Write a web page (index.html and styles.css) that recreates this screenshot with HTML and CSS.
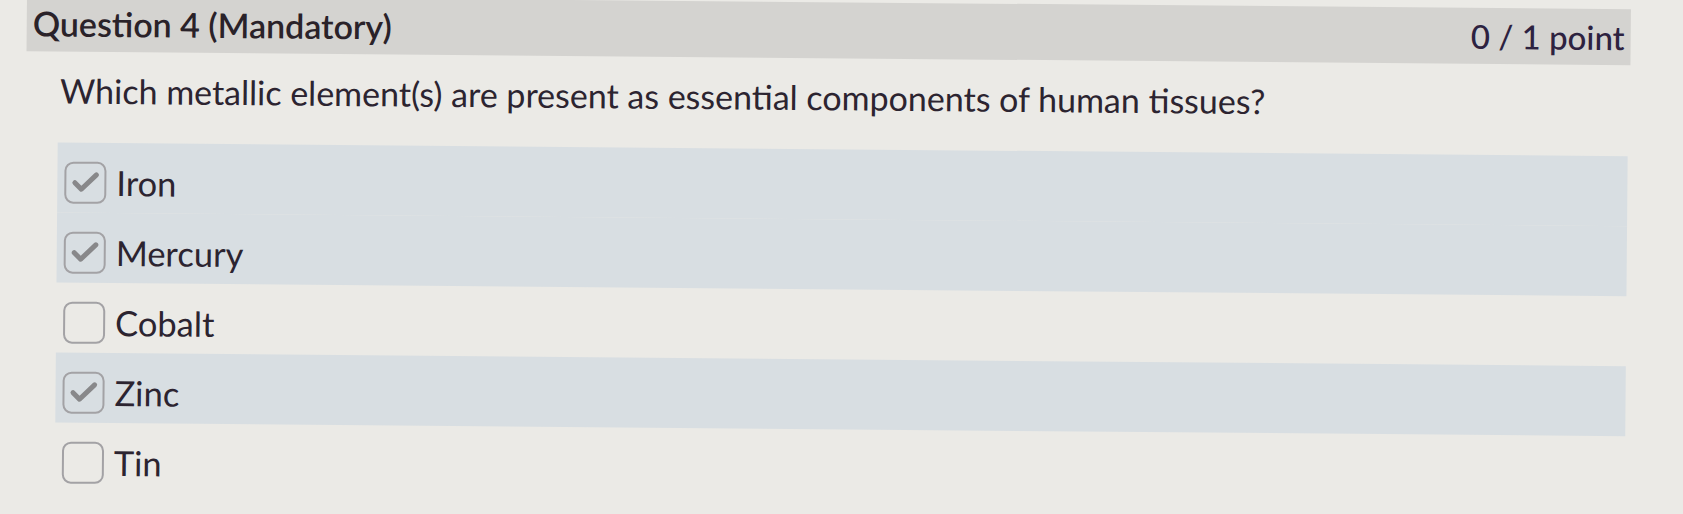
FILE: index.html
```html
<!DOCTYPE html>
<html lang="en">
<head>
<meta charset="utf-8">
<title>Question 4</title>
<link rel="stylesheet" href="styles.css">
</head>
<body>
<div class="page">
  <div class="question">
    <div class="q-header">
      <h2 class="q-title">Question 4 (Mandatory)</h2>
      <span class="q-points">0 / 1 point</span>
    </div>
    <p class="q-text">Which metallic element(s) are present as essential components of human tissues?</p>
    <ul class="options">
      <li class="option selected">
        <span class="box"><svg viewBox="0 0 42 42" class="check"><path d="M10.5 21 L17 27.5 L32 13"/></svg></span>
        <span class="label">Iron</span>
      </li>
      <li class="option selected">
        <span class="box"><svg viewBox="0 0 42 42" class="check"><path d="M10.5 21 L17 27.5 L32 13"/></svg></span>
        <span class="label">Mercury</span>
      </li>
      <li class="option">
        <span class="box"></span>
        <span class="label">Cobalt</span>
      </li>
      <li class="option selected">
        <span class="box"><svg viewBox="0 0 42 42" class="check"><path d="M10.5 21 L17 27.5 L32 13"/></svg></span>
        <span class="label">Zinc</span>
      </li>
      <li class="option">
        <span class="box"></span>
        <span class="label">Tin</span>
      </li>
    </ul>
  </div>
</div>
</body>
</html>
```

FILE: styles.css
```css
html, body {
  margin: 0;
  padding: 0;
  background: #ebeae6;
  overflow: hidden;
}

body {
  width: 1683px;
  height: 514px;
  font-family: Lato, "Open Sans", "Liberation Sans", sans-serif;
  color: #2c2430;
}

.page {
  transform: rotate(0.5deg);
  transform-origin: 0 0;
  padding-left: 27px;
}

.question {
  width: 1604px;
}

.q-header {
  margin-top: -5px;
  height: 56px;
  box-sizing: border-box;
  background: #d4d3d0;
  display: flex;
  justify-content: space-between;
  align-items: baseline;
  padding: 8px 6px 0 6px;
}

.q-title {
  margin: 0;
  font-size: 34px;
  line-height: 1.2;
  font-weight: 600;
  color: #2a2229;
}

.q-points {
  font-size: 33px;
  line-height: 1.2;
  font-weight: 500;
  color: #2d2240;
}

.q-text {
  margin: 19px 0 0 34px;
  font-size: 34px;
  line-height: 1.2;
  color: #2c2430;
}

.options {
  list-style: none;
  margin: 31px 0 0 32px;
  padding: 0;
  width: 1570px;
}

.option {
  height: 70px;
  box-sizing: border-box;
  padding: 19px 0 0 7px;
  display: flex;
  align-items: flex-start;
  gap: 10px;
}

.option.selected {
  background: #d8dee2;
}

.box {
  width: 42px;
  height: 42px;
  box-sizing: border-box;
  border: 2px solid #a3a2a5;
  border-radius: 9px;
  display: flex;
  align-items: center;
  justify-content: center;
  flex: none;
}

.check {
  width: 42px;
  height: 42px;
  flex: none;
  margin: -2px;
}

.check path {
  fill: none;
  stroke: #88888a;
  stroke-width: 5;
  stroke-linecap: round;
  stroke-linejoin: round;
}

.label {
  font-size: 34.5px;
  line-height: 42px;
  color: #2c2430;
}
```
